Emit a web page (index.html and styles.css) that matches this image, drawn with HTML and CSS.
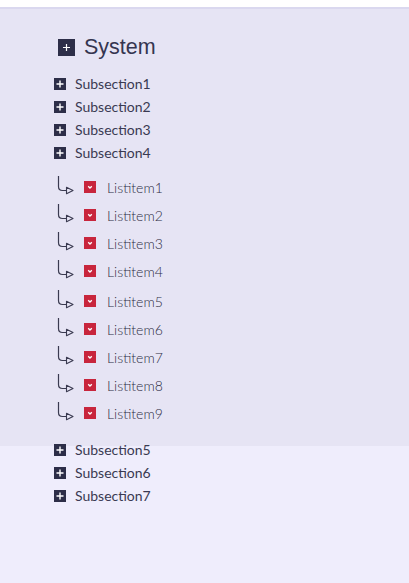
FILE: index.html
```html
<!DOCTYPE html>
<html>
<head>
<meta charset="utf-8">
<link rel="stylesheet" href="styles.css">
</head>
<body>
<div class="topbar"></div>
<div class="page">
  <div class="tree">
    <div class="root">
      <span class="box box-lg"><svg viewBox="0 0 17 17" width="17" height="17"><path d="M8.5 5v7M5 8.5h7" stroke="#fff" stroke-width="1.2"/></svg></span>
      <span class="root-label">System</span>
    </div>
    <ul class="subs">
      <li class="sub"><span class="box"><svg viewBox="0 0 12 12" width="12" height="12"><path d="M6 2.5v7M2.5 6h7" stroke="#fff" stroke-width="1.4"/></svg></span>Subsection1</li>
      <li class="sub"><span class="box"><svg viewBox="0 0 12 12" width="12" height="12"><path d="M6 2.5v7M2.5 6h7" stroke="#fff" stroke-width="1.4"/></svg></span>Subsection2</li>
      <li class="sub"><span class="box"><svg viewBox="0 0 12 12" width="12" height="12"><path d="M6 2.5v7M2.5 6h7" stroke="#fff" stroke-width="1.4"/></svg></span>Subsection3</li>
      <li class="sub"><span class="box"><svg viewBox="0 0 12 12" width="12" height="12"><path d="M6 2.5v7M2.5 6h7" stroke="#fff" stroke-width="1.4"/></svg></span>Subsection4</li>
    </ul>
    <ul class="items">
      <li class="item"><svg class="arrow" viewBox="0 0 20 24" width="20" height="24"><path d="M2.5 1v10.5q0 4 4 4H10" fill="none" stroke="#3a3a50" stroke-width="1.2"/><path d="M10.5 12.2l6.5 3.3-6.5 3.3z" fill="none" stroke="#3a3a50" stroke-width="1.1" stroke-linejoin="round"/></svg><span class="chk"><svg viewBox="0 0 12 12" width="12" height="12"><path d="M4.2 5.2l1.8 1.8 1.8-1.8" fill="none" stroke="#fff" stroke-width="1.3"/></svg></span>Listitem1</li>
      <li class="item"><svg class="arrow" viewBox="0 0 20 24" width="20" height="24"><path d="M2.5 1v10.5q0 4 4 4H10" fill="none" stroke="#3a3a50" stroke-width="1.2"/><path d="M10.5 12.2l6.5 3.3-6.5 3.3z" fill="none" stroke="#3a3a50" stroke-width="1.1" stroke-linejoin="round"/></svg><span class="chk"><svg viewBox="0 0 12 12" width="12" height="12"><path d="M4.2 5.2l1.8 1.8 1.8-1.8" fill="none" stroke="#fff" stroke-width="1.3"/></svg></span>Listitem2</li>
      <li class="item"><svg class="arrow" viewBox="0 0 20 24" width="20" height="24"><path d="M2.5 1v10.5q0 4 4 4H10" fill="none" stroke="#3a3a50" stroke-width="1.2"/><path d="M10.5 12.2l6.5 3.3-6.5 3.3z" fill="none" stroke="#3a3a50" stroke-width="1.1" stroke-linejoin="round"/></svg><span class="chk"><svg viewBox="0 0 12 12" width="12" height="12"><path d="M4.2 5.2l1.8 1.8 1.8-1.8" fill="none" stroke="#fff" stroke-width="1.3"/></svg></span>Listitem3</li>
      <li class="item"><svg class="arrow" viewBox="0 0 20 24" width="20" height="24"><path d="M2.5 1v10.5q0 4 4 4H10" fill="none" stroke="#3a3a50" stroke-width="1.2"/><path d="M10.5 12.2l6.5 3.3-6.5 3.3z" fill="none" stroke="#3a3a50" stroke-width="1.1" stroke-linejoin="round"/></svg><span class="chk"><svg viewBox="0 0 12 12" width="12" height="12"><path d="M4.2 5.2l1.8 1.8 1.8-1.8" fill="none" stroke="#fff" stroke-width="1.3"/></svg></span>Listitem4</li>
      <li class="item item-gap"><svg class="arrow" viewBox="0 0 20 24" width="20" height="24"><path d="M2.5 1v10.5q0 4 4 4H10" fill="none" stroke="#3a3a50" stroke-width="1.2"/><path d="M10.5 12.2l6.5 3.3-6.5 3.3z" fill="none" stroke="#3a3a50" stroke-width="1.1" stroke-linejoin="round"/></svg><span class="chk"><svg viewBox="0 0 12 12" width="12" height="12"><path d="M4.2 5.2l1.8 1.8 1.8-1.8" fill="none" stroke="#fff" stroke-width="1.3"/></svg></span>Listitem5</li>
      <li class="item"><svg class="arrow" viewBox="0 0 20 24" width="20" height="24"><path d="M2.5 1v10.5q0 4 4 4H10" fill="none" stroke="#3a3a50" stroke-width="1.2"/><path d="M10.5 12.2l6.5 3.3-6.5 3.3z" fill="none" stroke="#3a3a50" stroke-width="1.1" stroke-linejoin="round"/></svg><span class="chk"><svg viewBox="0 0 12 12" width="12" height="12"><path d="M4.2 5.2l1.8 1.8 1.8-1.8" fill="none" stroke="#fff" stroke-width="1.3"/></svg></span>Listitem6</li>
      <li class="item"><svg class="arrow" viewBox="0 0 20 24" width="20" height="24"><path d="M2.5 1v10.5q0 4 4 4H10" fill="none" stroke="#3a3a50" stroke-width="1.2"/><path d="M10.5 12.2l6.5 3.3-6.5 3.3z" fill="none" stroke="#3a3a50" stroke-width="1.1" stroke-linejoin="round"/></svg><span class="chk"><svg viewBox="0 0 12 12" width="12" height="12"><path d="M4.2 5.2l1.8 1.8 1.8-1.8" fill="none" stroke="#fff" stroke-width="1.3"/></svg></span>Listitem7</li>
      <li class="item"><svg class="arrow" viewBox="0 0 20 24" width="20" height="24"><path d="M2.5 1v10.5q0 4 4 4H10" fill="none" stroke="#3a3a50" stroke-width="1.2"/><path d="M10.5 12.2l6.5 3.3-6.5 3.3z" fill="none" stroke="#3a3a50" stroke-width="1.1" stroke-linejoin="round"/></svg><span class="chk"><svg viewBox="0 0 12 12" width="12" height="12"><path d="M4.2 5.2l1.8 1.8 1.8-1.8" fill="none" stroke="#fff" stroke-width="1.3"/></svg></span>Listitem8</li>
      <li class="item"><svg class="arrow" viewBox="0 0 20 24" width="20" height="24"><path d="M2.5 1v10.5q0 4 4 4H10" fill="none" stroke="#3a3a50" stroke-width="1.2"/><path d="M10.5 12.2l6.5 3.3-6.5 3.3z" fill="none" stroke="#3a3a50" stroke-width="1.1" stroke-linejoin="round"/></svg><span class="chk"><svg viewBox="0 0 12 12" width="12" height="12"><path d="M4.2 5.2l1.8 1.8 1.8-1.8" fill="none" stroke="#fff" stroke-width="1.3"/></svg></span>Listitem9</li>
    </ul>
    <ul class="subs subs-after">
      <li class="sub"><span class="box"><svg viewBox="0 0 12 12" width="12" height="12"><path d="M6 2.5v7M2.5 6h7" stroke="#fff" stroke-width="1.4"/></svg></span>Subsection5</li>
      <li class="sub"><span class="box"><svg viewBox="0 0 12 12" width="12" height="12"><path d="M6 2.5v7M2.5 6h7" stroke="#fff" stroke-width="1.4"/></svg></span>Subsection6</li>
      <li class="sub"><span class="box"><svg viewBox="0 0 12 12" width="12" height="12"><path d="M6 2.5v7M2.5 6h7" stroke="#fff" stroke-width="1.4"/></svg></span>Subsection7</li>
    </ul>
  </div>
</div>
</body>
</html>
```

FILE: styles.css
```css
html, body {
  margin: 0;
  padding: 0;
  background: #efedfc;
}
body {
  font-family: Lato, "Open Sans", sans-serif;
  width: 409px;
  height: 583px;
  overflow: hidden;
}
.topbar {
  height: 7px;
  background: #ffffff;
  border-bottom: 2px solid #dad8ef;
}
.page {
  height: 574px;
  background: linear-gradient(to bottom, #e6e4f4 0, #e6e4f4 437px, #efedfc 437px);
}
.tree {
  padding-top: 26px;
  padding-left: 54px;
}
ul {
  list-style: none;
  margin: 0;
  padding: 0;
}
.root {
  display: flex;
  align-items: center;
  height: 24px;
  padding-left: 4px;
  gap: 9px;
}
.box {
  display: flex;
  width: 12px;
  height: 12px;
  background: #2d2e48;
  flex: none;
}
.box-lg {
  width: 17px;
  height: 17px;
}
.root-label {
  font-family: "Liberation Sans", Arial, sans-serif;
  font-size: 21.5px;
  color: #353550;
  line-height: 24px;
}
.subs {
  margin-top: 13px;
}
.subs-after {
  margin-top: 11px;
}
.sub {
  display: flex;
  align-items: center;
  height: 23px;
  gap: 9px;
  font-size: 14px;
  color: #3a3a52;
}
.items {
  margin-top: 9px;
}
.item {
  display: flex;
  align-items: center;
  height: 28px;
  font-size: 14px;
  font-weight: 300;
  color: #2e2e44;
  padding-left: 2px;
}
.item-gap {
  margin-top: 2px;
}
.arrow {
  flex: none;
  margin-right: 8px;
}
.chk {
  display: flex;
  width: 12px;
  height: 12px;
  background: #c8253c;
  flex: none;
  margin-right: 11px;
}
```
